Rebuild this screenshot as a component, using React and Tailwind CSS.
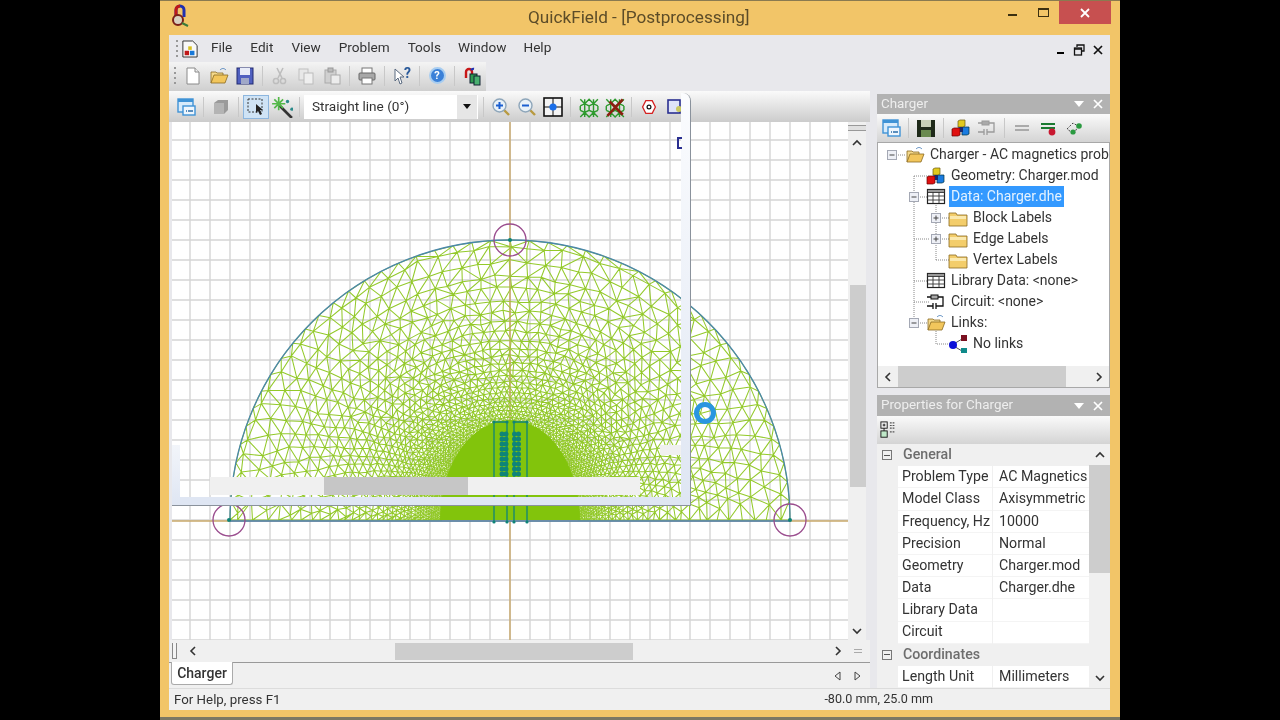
import React, { useMemo } from "react";

const S = ({ s = 20, children, className = "" }) => (
  <svg width={s} height={s} viewBox="0 0 20 20" className={className}>{children}</svg>
);
const Cubes = ({ s = 20 }) => (
  <S s={s}>
    <path d="M7 3l2-1h5v6l-2 1H7z" fill="#e2c91e" stroke="#6a5a10" strokeWidth=".7" />
    <path d="M1 11l2-1h6v7l-2 1H1z" fill="#e01010" stroke="#600" strokeWidth=".7" />
    <path d="M11 10l2-1h5v7l-2 1h-5z" fill="#1a7be0" stroke="#034" strokeWidth=".7" />
    <path d="M6 9h6v5H9V10z" fill="#1a2a70" />
  </S>
);
const WindowIco = () => (
  <S s={20}>
    <rect x="2" y="2" width="15" height="13" fill="#d7ebfb" stroke="#3f93d6" strokeWidth="1.4" />
    <rect x="2" y="2" width="15" height="3" fill="#3f93d6" />
    <rect x="7" y="9" width="12" height="9" fill="#eef6fd" stroke="#3f93d6" strokeWidth="1.4" />
    <path d="M10 14h1M12 14h5" stroke="#2a6ca8" strokeWidth="1.4" />
  </S>
);
const Folder = ({ open }) =>
  open ? (
    <S>
      <path d="M2 17V6h5l1 1h6v3" fill="#f4d98c" stroke="#8a6a22" strokeWidth=".8" />
      <path d="M2 17l3-8h14l-3 8z" fill="#f2c65c" stroke="#8a6a22" strokeWidth=".8" />
      <path d="M11 4c2-2 4-2 6 0" fill="none" stroke="#5a8ac0" strokeWidth="1" />
    </S>
  ) : (
    <S>
      <path d="M1 5h7l1 2h10v11H1z" fill="#f3cd6b" stroke="#8a6a22" strokeWidth=".8" />
      <rect x="2" y="8" width="16" height="3" fill="#fbe9ae" />
    </S>
  );
const Table = () => (
  <S>
    <rect x="1.5" y="2.5" width="17" height="14" fill="#fff" stroke="#222" strokeWidth="1.2" />
    <rect x="1.5" y="2.5" width="17" height="3" fill="#999" stroke="#222" strokeWidth=".8" />
    <path d="M1.5 9h17M1.5 13h17M7 5v11M13 5v11" stroke="#333" strokeWidth=".9" />
  </S>
);
const Circuit = ({ c = "#111" }) => (
  <S>
    <path d="M1 5h4M12 5h5v5M1 14h6M10 14h7v-4M7 11v6M10 11v6" fill="none" stroke={c} strokeWidth="1.3" />
    <rect x="5" y="3" width="7" height="4" fill="#aaa" stroke={c} strokeWidth="1" />
  </S>
);
const Links = () => (
  <S>
    <path d="M4 11L14 5M4 11l10 6" stroke="#555" strokeWidth="1" />
    <circle cx="5" cy="11" r="4" fill="#0c10d8" />
    <rect x="13" y="1" width="6" height="6" fill="#7a1020" />
    <rect x="13" y="14" width="6" height="5" fill="#0f8a8a" />
  </S>
);
const Lens = ({ plus }) => (
  <S>
    <path d="M13 13l5 5" stroke="#b89a40" strokeWidth="2.4" />
    <circle cx="8.5" cy="8.5" r="6.5" fill="#e8f1f8" stroke="#8ea6ba" strokeWidth="1.4" />
    <path d={plus ? "M5 8.5h7M8.5 5v7" : "M5 8.5h7"} stroke="#1a5fd0" strokeWidth="2" />
  </S>
);
const MeshIco = ({ x }) => (
  <S s={22}>
    <path d="M3 3l4 4 4-4 4 4 4-4M3 19l4-4 4 4 4-4 4 4M3 9l4-2 4 2 4-2 4 2M3 13l4 2 4-2 4 2 4-2M7 3v16M15 3v16M3 9v4M11 9v4M19 9v4" fill="none" stroke="#2d9a2d" strokeWidth="1.3" />
    {x && <path d="M4 18L18 3M6 5l12 12" stroke="#8a1f10" strokeWidth="2.4" />}
  </S>
);

const Tool = ({ children, active }) => (
  <div className={`w-[26px] h-[24px] flex items-center justify-center shrink-0 ${active ? "border border-[#8db6de] bg-[#cfe3f5]" : ""}`}>{children}</div>
);
const Sep = () => (
  <div className="w-[9px] flex justify-center shrink-0"><div className="w-px h-[20px] bg-[#c8c8c8]" /></div>
);
const Grip = () => (
  <div className="flex flex-col gap-[3px] w-[10px] items-center shrink-0">
    <div className="w-[2px] h-[2px] bg-[#999]" /><div className="w-[2px] h-[2px] bg-[#999]" /><div className="w-[2px] h-[2px] bg-[#999]" /><div className="w-[2px] h-[2px] bg-[#999]" />
  </div>
);
const Chevron = ({ d, c = "#333", s = 12 }) => (
  <svg width={s} height={s} viewBox="0 0 12 12">
    <path d={{ l: "M8 2L4 6l4 4", r: "M4 2l4 4-4 4", u: "M2 8l4-4 4 4", d: "M2 4l4 4 4-4" }[d]} fill="none" stroke={c} strokeWidth="1.6" />
  </svg>
);

function useMesh() {
  return useMemo(() => {
    let seed = 12345;
    const rnd = () => { seed = (seed * 1664525 + 1013904223) % 4294967296; return seed / 4294967296 - 0.5; };
    const sp = (r) => 2.4 + 16.5 * Math.pow(Math.max(r - 70, 0) / 210, 1.2);
    const rings = [];
    let r = 68;
    let k = 0;
    while (r < 275) {
      const s = sp(r);
      const n = Math.max(6, Math.round((Math.PI * r) / s));
      const pts = [];
      for (let i = 0; i <= n; i++) {
        const base = i / n;
        const off = k % 2 && i > 0 && i < n ? 0.5 / n : 0;
        const jr = rnd() * s * 0.3;
        const ja = i > 0 && i < n ? (rnd() * s * 0.3) / r : 0;
        const a = Math.PI * (base + off) + ja;
        pts.push({ a, x: 510 + (r + jr) * Math.cos(a), y: 520 - (r + jr) * Math.sin(a) });
      }
      rings.push(pts);
      r += s * 0.88;
      k++;
    }
    const last = [];
    const nOut = Math.round((Math.PI * 280) / 19);
    for (let i = 0; i <= nOut; i++) {
      const a = (Math.PI * i) / nOut;
      last.push({ a, x: 510 + 280 * Math.cos(a), y: 520 - 280 * Math.sin(a) });
    }
    rings.push(last);
    const seg = [];
    const L = (p, q) => seg.push(`M${p.x.toFixed(1)} ${p.y.toFixed(1)}L${q.x.toFixed(1)} ${q.y.toFixed(1)}`);
    rings.forEach((ring, idx) => {
      for (let i = 0; i + 1 < ring.length; i++) L(ring[i], ring[i + 1]);
      if (idx + 1 < rings.length) {
        const nx = rings[idx + 1];
        let i = 0, j = 0;
        L(ring[0], nx[0]);
        while (i < ring.length - 1 || j < nx.length - 1) {
          const ai = i < ring.length - 1 ? ring[i + 1].a : 9;
          const aj = j < nx.length - 1 ? nx[j + 1].a : 9;
          if (ai < aj) i++; else j++;
          L(ring[i], nx[j]);
        }
      }
    });
    return seg.join("");
  }, []);
}

function Canvas() {
  const mesh = useMesh();
  const xs = []; for (let x = 190; x <= 848; x += 20) xs.push(x);
  const ys = []; for (let y = 140; y <= 640; y += 20) ys.push(y);
  const beads = [];
  for (let y = 434; y <= 474; y += 5) for (const x of [502, 506, 514.5, 518.5]) beads.push([x, y]);
  const coil = [494, 507, 514, 527];
  return (
    <svg width="676" height="518" viewBox="172 122 676 518" className="block">
      <rect x="172" y="122" width="676" height="518" fill="#fff" />
      {xs.map((x) => <path key={x} d={`M${x} 122V640`} stroke="#d4d4d4" strokeWidth="1.4" />)}
      {ys.map((y) => <path key={y} d={`M172 ${y}H848`} stroke="#d4d4d4" strokeWidth="1.4" />)}
      <path d="M510 122V640M172 521H848" stroke="#c9a96b" strokeWidth="1.4" />
      <path d={mesh} fill="none" stroke="#93c92a" strokeWidth="1.05" />
      <path d="M440 520A70 100 0 0 1 580 520Z" fill="#82c40c" />
      <path d="M510 240V400" stroke="#c9a96b" strokeWidth="1" opacity=".7" />
      <path d="M230 520A280 280 0 0 1 790 520" fill="none" stroke="#4a86ad" strokeWidth="1.3" />
      <path d="M230 521H790" stroke="#4a7fb5" strokeWidth="1.5" />
      {coil.map((x) => <path key={x} d={`M${x} 422V522`} stroke="#0f8478" strokeWidth="1.3" />)}
      <path d="M494 422H507M514 422H527" stroke="#0f8478" strokeWidth="1.3" />
      {coil.map((x) => <circle key={x} cx={x} cy="422" r="1.6" fill="#0f8478" />)}
      {coil.map((x) => <circle key={x + "b"} cx={x} cy="522" r="1.6" fill="#0f8478" />)}
      {beads.map(([x, y], i) => <circle key={i} cx={x} cy={y} r="2.5" fill="#0f8478" />)}
      {[[229, 520], [790, 520], [510, 240]].map(([x, y]) => (
        <g key={x}>
          <circle cx={x} cy={y} r="16" fill="none" stroke="#9a4d8e" strokeWidth="1.3" />
          <circle cx={x} cy={y} r="2" fill="#0f8478" />
        </g>
      ))}
    </svg>
  );
}

function Ghost() {
  return (
    <div className="absolute left-[12px] top-[93px] w-[519px] h-[413px] border-r border-b border-[#8a929c] rounded-tr-lg pointer-events-none">
      <div className="absolute right-0 top-0 bottom-0 w-[9px] bg-gradient-to-b from-[#fbfcfe] to-[#dfe6f3] rounded-tr-lg" />
      <div className="absolute left-0 right-0 bottom-0 h-[8px] bg-[#dfe6f3]" />
      <div className="absolute left-0 top-[352px] bottom-0 w-[8px] bg-gradient-to-b from-[#f2f5fa] to-[#dfe6f3]" />
      <div className="absolute left-[38px] top-[384px] w-[430px] h-[18px] bg-[#f0f0f0]">
        <div className="ml-[114px] w-[144px] h-full bg-[#c6c6c6]" />
      </div>
      <div className="absolute left-[488px] top-[352px] w-[21px] h-[10px] bg-[#f0f0f0]" />
      <div className="absolute left-[505px] top-[44px] w-[5px] h-[12px] border-l-2 border-y-2 border-[#2a2f90]" />
    </div>
  );
}

const TreeRow = ({ level, icon, selected, children }) => {
  const pad = { 1: "pl-[27px]", 2: "pl-[48px]", 3: "pl-[70px]" }[level];
  return (
    <div className={`h-[21px] flex items-center ${pad}`}>
      <div className="w-[20px] h-[20px] flex items-center justify-center shrink-0">{icon}</div>
      <span className={`ml-[3px] px-[2px] h-[21px] leading-[21px] whitespace-nowrap ${selected ? "bg-[#3399ff] text-[#e4f2ff]" : ""}`}>{children}</span>
    </div>
  );
};

const Exp = ({ x, y, plus }) => (
  <g>
    <rect x={x - 4.5} y={y - 4.5} width="9" height="9" fill="#eef0f6" stroke="#a4a8b4" />
    <path d={plus ? `M${x - 2.5} ${y}h5M${x} ${y - 2.5}v5` : `M${x - 2.5} ${y}h5`} stroke="#444" strokeWidth="1" />
  </g>
);

function Tree() {
  return (
    <div className="relative h-[246px] border border-[#a8a8a8] bg-white flex flex-col text-[#333] overflow-hidden">
      <svg width="231" height="244" className="absolute left-0 top-0">
        <path d="M14 12h13M36 33V180M36 33h15M36 96h15M36 138h15M36 159h15M36 54h13M36 180h14M58 54V117M58 75h14M58 96h14M58 117h14M58 180V201h14" fill="none" stroke="#888" strokeDasharray="1 1" />
        <Exp x={14} y={12} />
        <Exp x={36} y={54} />
        <Exp x={58} y={75} plus />
        <Exp x={58} y={96} plus />
        <Exp x={36} y={180} />
      </svg>
      <div className="relative flex-1 pt-[1px] text-[14px] overflow-hidden">
        <TreeRow level={1} icon={<Folder open />}>Charger - AC magnetics problem</TreeRow>
        <TreeRow level={2} icon={<Cubes />}>Geometry: Charger.mod</TreeRow>
        <TreeRow level={2} icon={<Table />} selected>Data: Charger.dhe</TreeRow>
        <TreeRow level={3} icon={<Folder />}>Block Labels</TreeRow>
        <TreeRow level={3} icon={<Folder />}>Edge Labels</TreeRow>
        <TreeRow level={3} icon={<Folder />}>Vertex Labels</TreeRow>
        <TreeRow level={2} icon={<Table />}>Library Data: &lt;none&gt;</TreeRow>
        <TreeRow level={2} icon={<Circuit />}>Circuit: &lt;none&gt;</TreeRow>
        <TreeRow level={2} icon={<Folder open />}>Links:</TreeRow>
        <TreeRow level={3} icon={<Links />}>No links</TreeRow>
      </div>
      <div className="h-[21px] flex items-center bg-[#f0f0f0] shrink-0">
        <div className="w-[20px] flex justify-center"><Chevron d="l" /></div>
        <div className="w-[168px] h-full bg-[#cdcdcd]" />
        <div className="flex-1" />
        <div className="w-[20px] flex justify-center"><Chevron d="r" /></div>
      </div>
    </div>
  );
}

const Group = ({ children }) => (
  <div className="h-[22.2px] flex items-center bg-[#f0f0f0] text-[#6d6d6d] font-medium">
    <div className="w-[20px] flex justify-center shrink-0">
      <div className="w-[10px] h-[10px] border border-[#777] flex items-center justify-center"><div className="w-[6px] h-px bg-[#555]" /></div>
    </div>
    <span className="ml-[6px]">{children}</span>
  </div>
);
const Prop = ({ n, v }) => (
  <div className="h-[22.2px] flex items-center bg-[#f0f0f0] text-[#333]">
    <div className="w-[21px] shrink-0" />
    <div className="w-[94px] h-full bg-white flex items-center pl-[4px] border-b border-[#f4f4f4] whitespace-nowrap shrink-0">{n}</div>
    <div className="w-px h-full bg-[#f0f0f0]" />
    <div className="flex-1 h-full bg-white flex items-center pl-[6px] border-b border-[#f4f4f4] whitespace-nowrap">{v}</div>
  </div>
);

function PanelTitle({ children, h }) {
  return (
    <div className={`${h} bg-[#b2b2b2] flex items-center pl-[4px] pr-[6px] text-[#eeeeee] text-[13.4px] shrink-0`}>
      <span className="flex-1">{children}</span>
      <svg width="12" height="8" viewBox="0 0 12 8" className="mr-[7px]"><path d="M1 1h10L6 7z" fill="#fff" /></svg>
      <svg width="12" height="12" viewBox="0 0 12 12"><path d="M2 2l8 8M10 2l-8 8" stroke="#fff" strokeWidth="1.7" /></svg>
    </div>
  );
}

export default function App() {
  const font = "font-['Roboto','Noto_Sans',sans-serif]";
  return (
    <div className={`w-[1280px] h-[720px] bg-black flex justify-center overflow-hidden ${font}`}>
      <div className="relative w-[960px] h-[720px] bg-[#f2c568] flex flex-col blur-[0.4px]">
        {/* Title bar */}
        <div className="h-[35px] flex items-center relative shrink-0 border-t border-[#8a7a50]">
          <div className="ml-[8px] w-[24px] h-[24px] -mt-[4px]">
            <svg width="24" height="24" viewBox="0 0 24 24">
              <path d="M8 13V6a4 4 0 0 1 8 0v7" fill="none" stroke="#2030b0" strokeWidth="3" />
              <path d="M8 13V6a4 4 0 0 1 4-4" fill="none" stroke="#c01818" strokeWidth="3" />
              <circle cx="10" cy="16" r="5" fill="#d8d0c0" stroke="#7a2018" strokeWidth="2" />
              <path d="M14 19l6 3" stroke="#3a7a3a" strokeWidth="2" />
            </svg>
          </div>
          <div className="absolute left-[368px] top-[4px] text-[#5c4c28] text-[17.2px] whitespace-nowrap">QuickField - [Postprocessing]</div>
          <div className="ml-auto flex items-start self-start h-[23px] mr-[9px]">
            <div className="w-[31px] h-[23px] flex justify-center pt-[13px]"><div className="w-[9px] h-[2px] bg-[#3c3010]" /></div>
            <div className="w-[31px] h-[23px] flex justify-center pt-[7px]"><div className="w-[11px] h-[9px] border border-t-2 border-[#3c3010]" /></div>
            <div className="w-[52px] h-[23px] bg-[#c75050] flex items-center justify-center">
              <svg width="12" height="12" viewBox="0 0 12 12"><path d="M2 2l8 8M10 2l-8 8" stroke="#fff" strokeWidth="1.8" /></svg>
            </div>
          </div>
        </div>
        {/* Client */}
        <div className="h-[675px] shrink-0 ml-[9px] mr-[10px] bg-[#e8e8ec] flex flex-col overflow-hidden">
          {/* Menu */}
          <div className="h-[27px] flex items-center text-[13.6px] text-[#333] shrink-0">
            <div className="w-[3px]" />
            <Grip />
            <div className="w-[16px] h-[20px] flex items-center justify-center shrink-0">
              <svg width="18" height="20" viewBox="0 0 18 20">
                <path d="M1 1h11l5 5v13H1z" fill="#f8f8f8" stroke="#222" strokeWidth="1" />
                <rect x="7" y="7" width="4" height="4" fill="#d8c020" /><rect x="3" y="12" width="5" height="5" fill="#c01818" /><rect x="9" y="12" width="5" height="5" fill="#1878d8" />
              </svg>
            </div>
            <span className="ml-[13px] -mt-[2px]">File</span>
            <span className="ml-[18px] -mt-[2px]">Edit</span>
            <span className="ml-[18px] -mt-[2px]">View</span>
            <span className="ml-[18px] -mt-[2px]">Problem</span>
            <span className="ml-[18px] -mt-[2px]">Tools</span>
            <span className="ml-[17px] -mt-[2px]">Window</span>
            <span className="ml-[17px] -mt-[2px]">Help</span>
            <div className="ml-auto flex items-center gap-[7px] mr-[6px] mt-[2px]">
              <div className="w-[12px] flex justify-center pt-[6px]"><div className="w-[7px] h-[2px] bg-black" /></div>
              <svg width="12" height="12" viewBox="0 0 12 12"><path d="M4 3V1h7v6H9" fill="none" stroke="#111" strokeWidth="1.3" /><rect x="1.5" y="4" width="7" height="7" fill="none" stroke="#111" strokeWidth="1.3" /><path d="M1.5 5h7" stroke="#111" strokeWidth="1.5" /></svg>
              <svg width="12" height="12" viewBox="0 0 12 12"><path d="M2 2l8 8M10 2l-8 8" stroke="#111" strokeWidth="1.7" /></svg>
            </div>
          </div>
          {/* Toolbar 1 */}
          <div className="h-[29px] shrink-0 flex">
            <div className="w-[317px] pl-[1px] h-full bg-gradient-to-b from-[#f4f4f4] to-[#cfcfcf] flex items-center pb-[2px]">
              <Grip />
              <Tool>
                <svg width="16" height="18" viewBox="0 0 16 18"><path d="M2 1h8l4 4v12H2z" fill="#fff" stroke="#8a8a8a" strokeWidth="1" /><path d="M10 1v4h4" fill="#eee" stroke="#8a8a8a" /></svg>
              </Tool>
              <Tool><Folder open /></Tool>
              <Tool>
                <S><rect x="2" y="2" width="16" height="16" fill="#5060c0" stroke="#222a70" /><rect x="5" y="2" width="10" height="7" fill="#e8ecf8" /><rect x="6" y="12" width="8" height="6" fill="#a0a8c8" /></S>
              </Tool>
              <Sep />
              <Tool>
                <S><path d="M7 2l5 10M13 2L8 12" stroke="#bdbdbd" strokeWidth="1.6" /><circle cx="6" cy="15" r="2.6" fill="none" stroke="#bdbdbd" strokeWidth="1.5" /><circle cx="13" cy="15" r="2.6" fill="none" stroke="#bdbdbd" strokeWidth="1.5" /></S>
              </Tool>
              <Tool>
                <S><rect x="3" y="3" width="9" height="11" fill="#e8e8e8" stroke="#c0c0c0" /><rect x="8" y="7" width="9" height="11" fill="#efefef" stroke="#bcbcbc" /></S>
              </Tool>
              <Tool>
                <S><rect x="3" y="4" width="11" height="13" fill="#d0d0d0" stroke="#aaa" /><rect x="6" y="2" width="5" height="4" fill="#bbb" stroke="#999" /><rect x="9" y="9" width="9" height="9" fill="#ececec" stroke="#aaa" /></S>
              </Tool>
              <Sep />
              <Tool>
                <S><rect x="5" y="2" width="10" height="6" fill="#fff" stroke="#777" /><rect x="2" y="7" width="16" height="7" rx="1" fill="#a8a8a8" stroke="#666" /><rect x="5" y="12" width="10" height="6" fill="#fff" stroke="#777" /></S>
              </Tool>
              <Sep />
              <Tool>
                <S><path d="M2 3l9 8H7l2 6-2 1-2-6-3 3z" fill="#fff" stroke="#5a6a80" strokeWidth="1" /></S>
                <span className="text-[14px] font-bold text-[#2a5a9a] -ml-[9px] -mt-[5px]">?</span>
              </Tool>
              <Sep />
              <Tool>
                <div className="w-[17px] h-[17px] rounded-full bg-[#3a80d8] border-2 border-[#a8cdf0] text-white text-[11px] font-bold leading-[13px] text-center">?</div>
              </Tool>
              <Sep />
              <Tool>
                <S><path d="M4 12V6a3 3 0 0 1 6 0v6" fill="none" stroke="#c81818" strokeWidth="2.4" /><path d="M9 4a3 3 0 0 1 3-1" fill="none" stroke="#2030b0" strokeWidth="2.4" /><rect x="8" y="8" width="7" height="9" fill="#2f9a50" stroke="#123" /><rect x="12" y="10" width="6" height="9" fill="#4ab070" stroke="#123" /></S>
              </Tool>
            </div>
          </div>
          {/* Main */}
          <div className="flex-1 flex min-h-0">
            {/* Left */}
            <div className="w-[701px] flex flex-col shrink-0 pl-[1px]">
              <div className="h-[31px] -ml-[1px] pl-[4px] bg-gradient-to-b from-[#fafafa] to-[#cccccc] flex items-center shrink-0">
                <Tool><WindowIco /></Tool>
                <Sep />
                <Tool>
                  <S s={20}><path d="M3 6l4-3h10v10l-4 4H3z" fill="#9a9a9a" /><path d="M3 6h10v11H3z" fill="#b4b4b4" /></S>
                </Tool>
                <Sep />
                <Tool active>
                  <svg width="20" height="20" viewBox="0 0 20 20"><rect x="2" y="2" width="14" height="13" fill="none" stroke="#333" strokeDasharray="2 1.5" /><path d="M10 7l7 6h-3l2 4-2 1-2-4-2 2z" fill="#222" /></svg>
                </Tool>
                <Tool>
                  <S s={22}><path d="M7 8l12 12" stroke="#333" strokeWidth="2.4" /><path d="M7 1v12M1 7h12M3 3l8 8M11 3l-8 8" stroke="#54b848" strokeWidth="1.5" /><circle cx="15" cy="5" r="1.5" fill="#2a8a8a" /><circle cx="19" cy="12" r="1.5" fill="#2a8a8a" /></S>
                </Tool>
                <Sep />
                <div className="w-[174px] h-[24px] bg-white flex items-center text-[13.6px] text-[#333] pl-[8px] shrink-0 whitespace-nowrap">
                  <span className="flex-1">Straight line (0°)</span>
                  <div className="w-[20px] h-full bg-[#e6e6e6] mr-[1px] flex items-center justify-center">
                    <svg width="8" height="5" viewBox="0 0 8 5"><path d="M0 0h8L4 5z" fill="#111" /></svg>
                  </div>
                </div>
                <div className="w-[10px] flex justify-center shrink-0"><div className="w-px h-[20px] bg-[#c8c8c8]" /></div>
                <Tool><Lens plus /></Tool>
                <Tool><Lens /></Tool>
                <Tool>
                  <S><rect x="1" y="1" width="18" height="18" fill="#f4f4f4" stroke="#111" strokeWidth="1.6" /><path d="M10 1v18M1 10h18" stroke="#111" /><circle cx="10" cy="10" r="3.6" fill="#1a6ee8" /></S>
                </Tool>
                <Sep />
                <Tool><MeshIco /></Tool>
                <Tool><MeshIco x /></Tool>
                <Sep />
                <Tool>
                  <S s={16}><path d="M6 2h8l4 8-4 8H6l-4-8z" fill="#fff" stroke="#d42020" strokeWidth="1.6" /><circle cx="10" cy="10" r="2.4" fill="none" stroke="#111" strokeWidth="1.5" /></S>
                </Tool>
                <Tool>
                  <S><rect x="3" y="3" width="12" height="13" fill="#dfe4f8" stroke="#2a2f90" strokeWidth="1.6" /><circle cx="14" cy="12" r="3" fill="#c8c860" /></S>
                </Tool>
              </div>
              <div className="h-[518px] flex shrink-0 pl-[2px]">
                <Canvas />
                <div className="w-[18px] bg-[#f0f0f0] flex flex-col items-center shrink-0">
                  <div className="w-full h-[6px] mt-[3px] border-y border-[#999] bg-[#e0e0e0]" />
                  <div className="mt-[6px]"><Chevron d="u" /></div>
                  <div className="mt-[136px] ml-[1px] w-[16px] h-[202px] bg-[#cdcdcd]" />
                  <div className="mt-auto mb-[3px]"><Chevron d="d" /></div>
                </div>
              </div>
              <div className="h-[22px] flex items-center bg-[#f0f0f0] shrink-0 pr-[6px]">
                <div className="ml-[2px] w-[5px] h-[16px] border border-[#888] border-t-0 bg-[#f4f4f4]" />
                <div className="w-[20px] ml-[6px] flex justify-center"><Chevron d="l" /></div>
                <div className="ml-[192px] w-[238px] h-[17px] bg-[#cdcdcd]" />
                <div className="ml-[199px] w-[12px]"><Chevron d="r" /></div>
                <div className="ml-auto flex flex-col gap-[2px] mr-[2px]"><div className="w-[8px] h-[1px] bg-[#aaa]" /><div className="w-[8px] h-[1px] bg-[#aaa]" /></div>
              </div>
              <div className="h-[26px] flex items-start border-t border-[#999] bg-[#f0f0f0] -ml-[1px] shrink-0 relative">
                <div className="ml-[2px] -mt-px w-[62px] h-[23px] bg-white border border-[#aaa] border-t-0 rounded-b-[3px] flex items-center justify-center text-[14px] text-[#333] font-medium">Charger</div>
                <div className="ml-auto flex gap-[11px] mt-[8px] mr-[9px]">
                  <svg width="8" height="10" viewBox="0 0 8 10"><path d="M6 1L1 5l5 4z" fill="none" stroke="#444" /></svg>
                  <svg width="8" height="10" viewBox="0 0 8 10"><path d="M2 1l5 4-5 4z" fill="none" stroke="#444" /></svg>
                </div>
              </div>
            </div>
            {/* Right */}
            <div className="ml-[7px] w-[233px] pt-[3px] flex flex-col shrink-0">
              <PanelTitle h="h-[20px]">Charger</PanelTitle>
              <div className="h-[28px] -mr-[2px] bg-gradient-to-b from-[#fafafa] to-[#d4d4d4] flex items-center pl-[1px] shrink-0">
                <Tool><WindowIco /></Tool>
                <Sep />
                <Tool>
                  <S><rect x="1" y="2" width="18" height="17" fill="#1f2a1a" /><rect x="5" y="2" width="10" height="7" fill="#c8d0b8" /><rect x="5" y="12" width="10" height="7" fill="#6a8a50" /></S>
                </Tool>
                <Sep />
                <Tool><Cubes /></Tool>
                <Tool><Circuit c="#9a9a9a" /></Tool>
                <Sep />
                <Tool><S><path d="M3 8h14M3 12h14" stroke="#aaa" strokeWidth="2" /></S></Tool>
                <Tool><S><path d="M3 6h14M3 10h14" stroke="#1a7a30" strokeWidth="2.2" /><circle cx="14" cy="14" r="3.4" fill="#c81830" /></S></Tool>
                <Tool><S><path d="M3 11l6-6 5 3-4 8z" fill="none" stroke="#444" strokeDasharray="2 1.5" /><circle cx="9" cy="14" r="2.6" fill="#2a9a40" /><circle cx="15" cy="8" r="2.8" fill="#2a9a40" /></S></Tool>
              </div>
              <Tree />
              <div className="mt-[7px]"><PanelTitle h="h-[21px]">Properties for Charger</PanelTitle></div>
              <div className="h-[28px] -mr-[2px] bg-gradient-to-b from-[#fafafa] to-[#d4d4d4] flex items-center pl-[3px] shrink-0">
                <S s={18}>
                  <rect x="1" y="1" width="7" height="7" fill="#eee" stroke="#111" /><path d="M3 4.5h3M4.5 3v3" stroke="#111" /><rect x="1" y="11" width="7" height="7" fill="#bfe8c8" stroke="#111" /><path d="M4.5 8v3" stroke="#111" />
                  <path d="M11 2h6M11 5h6M11 8h6M11 12h6" stroke="#555" strokeWidth="1.3" strokeDasharray="2 1" />
                </S>
              </div>
              <div className="flex-1 flex bg-[#f0f0f0] text-[14.2px] min-h-0 overflow-hidden">
                <div className="w-[212px] shrink-0">
                  <Group>General</Group>
                  <Prop n="Problem Type" v="AC Magnetics" />
                  <Prop n="Model Class" v="Axisymmetric" />
                  <Prop n="Frequency, Hz" v="10000" />
                  <Prop n="Precision" v="Normal" />
                  <Prop n="Geometry" v="Charger.mod" />
                  <Prop n="Data" v="Charger.dhe" />
                  <Prop n="Library Data" v="" />
                  <Prop n="Circuit" v="" />
                  <Group>Coordinates</Group>
                  <Prop n="Length Unit" v="Millimeters" />
                </div>
                <div className="flex-1 flex flex-col items-center">
                  <div className="h-[21px] flex items-center"><Chevron d="u" /></div>
                  <div className="w-full h-[108px] bg-[#cdcdcd]" />
                  <div className="mt-auto h-[21px] flex items-center"><Chevron d="d" /></div>
                </div>
              </div>
            </div>
          </div>
          {/* Status */}
          <div className="h-[22px] flex items-center text-[13.3px] text-[#333] shrink-0 border-t border-[#dcdcdc] bg-[#f0f0f0]">
            <span className="ml-[5px]">For Help, press F1</span>
            <span className="ml-auto mr-[177px] text-[12.6px]">-80.0 mm, 25.0 mm</span>
          </div>
        </div>
        <div className="h-[10px] shrink-0 border-b-[3px] border-[#7c7864]" />
        <Ghost />
        <div className="absolute left-[534px] top-[402px] w-[22px] h-[22px] rounded-full border-[5px] border-[#2a96e0]" />
      </div>
    </div>
  );
}
